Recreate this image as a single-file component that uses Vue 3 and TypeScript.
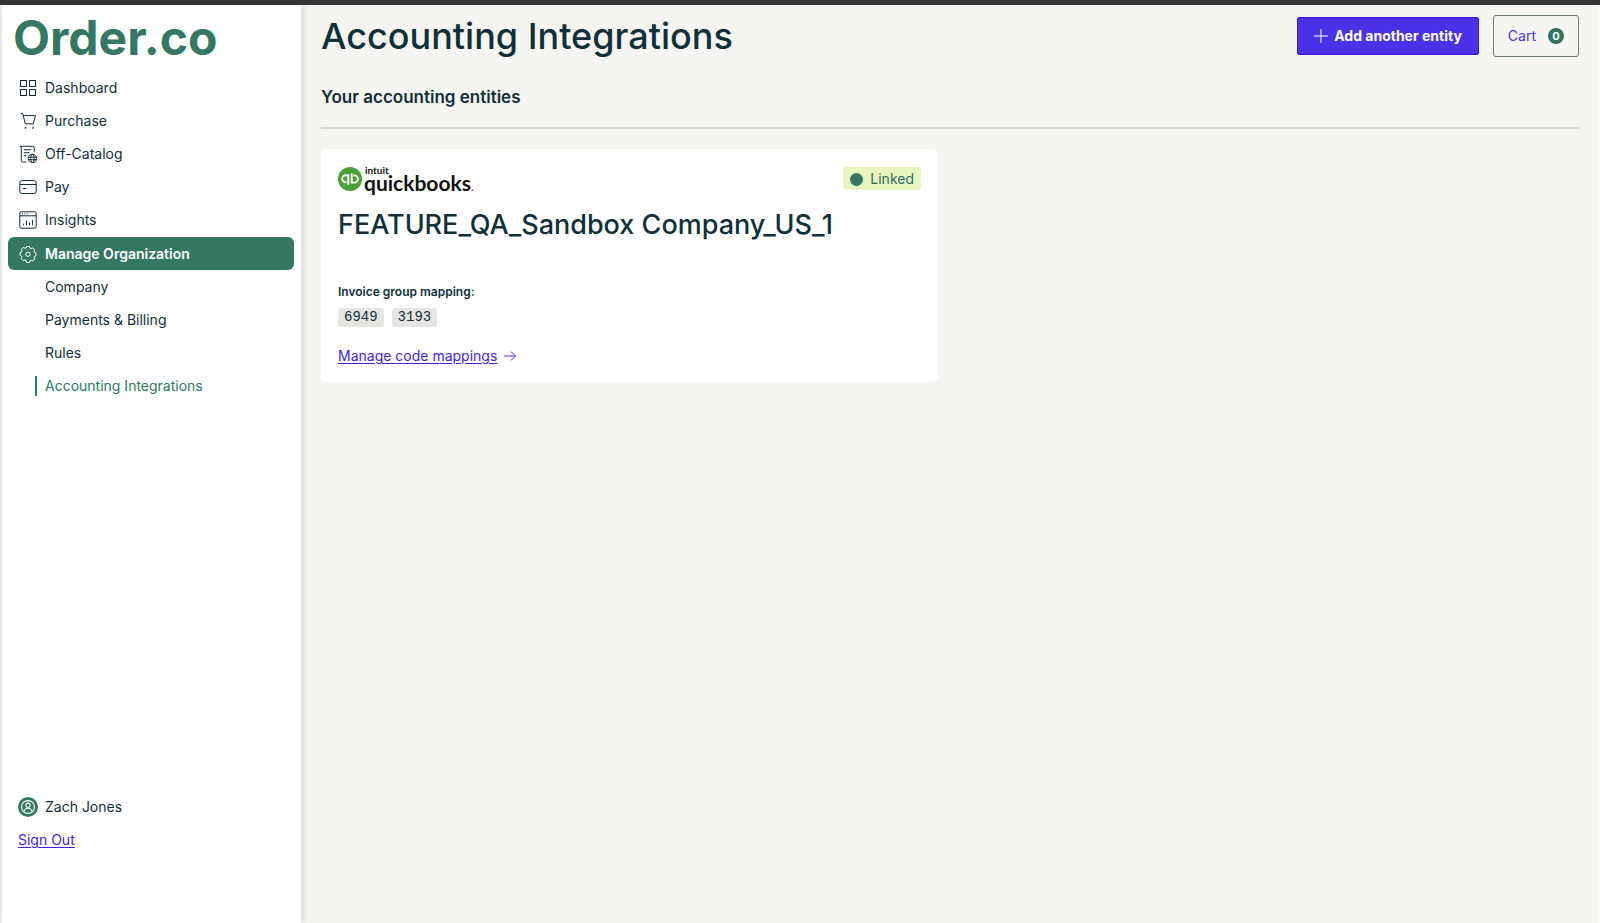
<script setup lang="ts">
interface NavItem {
  label: string
  icon: string
  active?: boolean
}

const navItems: NavItem[] = [
  { label: 'Dashboard', icon: 'grid' },
  { label: 'Purchase', icon: 'cart' },
  { label: 'Off-Catalog', icon: 'catalog' },
  { label: 'Pay', icon: 'card' },
  { label: 'Insights', icon: 'chart' },
  { label: 'Manage Organization', icon: 'gear', active: true },
]

const subItems: { label: string; current?: boolean }[] = [
  { label: 'Company' },
  { label: 'Payments & Billing' },
  { label: 'Rules' },
  { label: 'Accounting Integrations', current: true },
]

const invoiceGroups: string[] = ['6949', '3193']
</script>

<template>
  <div class="app">
    <aside class="sidebar">
      <a class="brand" href="#">Order.co</a>
      <nav class="nav" aria-label="Main">
        <a
          v-for="item in navItems"
          :key="item.label"
          href="#"
          class="nav-item"
          :class="{ active: item.active }"
        >
          <svg class="nav-icon" viewBox="0 0 18 18" aria-hidden="true">
            <g v-if="item.icon === 'grid'">
              <rect x="1.5" y="1.500" width="6" height="6" />
              <rect x="10.500" y="1.500" width="6" height="6" />
              <rect x="1.500" y="10.500" width="6" height="6" />
              <rect x="10.500" y="10.500" width="6" height="6" />
            </g>
            <g v-else-if="item.icon === 'cart'">
              <path d="M1.600 1.600h2.200l2.400 10.200h8.200l2-8.200H4.300" />
              <circle class="solid" cx="6.400" cy="15.800" r="0.900" />
              <circle class="solid" cx="14" cy="15.800" r="0.900" />
            </g>
            <g v-else-if="item.icon === 'catalog'">
              <path d="M7.500 17H3.800a1.500 1.500 0 0 1-1.500-1.500V3A1.500 1.500 0 0 0 .8 1.300h13A1.500 1.500 0 0 1 15.300 2.800v4M4.800 4.700h7.600M4.800 7.700h5.600M4.800 10.700h2.600" />
              <circle cx="13.400" cy="13.400" r="4.100" />
              <path d="M9.500 12.200h7.800M9.500 14.700h7.800" />
              <ellipse cx="13.400" cy="13.400" rx="1.700" ry="4" />
            </g>
            <g v-else-if="item.icon === 'card'">
              <rect x="0.800" y="2.500" width="16.400" height="13" rx="2.400" />
              <path d="M0.800 6.500h16.400M4 10.500h3.400" />
            </g>
            <g v-else-if="item.icon === 'chart'">
              <rect x="0.800" y="0.800" width="16.400" height="16.400" rx="1.400" />
              <path d="M0.800 4.800h16.400M3 2.900h1M5.400 2.900h1M7.800 2.900h1" />
              <path d="M4.600 14.200v-1.600M7.500 14.200V9.800M10.500 14.200v-3M13.500 14.200V9" />
            </g>
            <g v-else>
              <path d="M7.600 1.500h2.800l.6 1.600 1.200.5 1.600-.7 1.900 2-.7 1.500.5 1.200 1.500.6v2.600l-1.500.7-.5 1.200.7 1.500-1.900 1.900-1.600-.7-1.200.5-.6 1.600H7.600L7 15.400l-1.200-.5-1.600.7-1.900-1.900.7-1.500-.5-1.200L1 10.300V7.700l1.500-.6L3 5.900l-.7-1.500 1.900-2 1.600.7L7 3.100z" stroke-linejoin="round" />
              <circle cx="9" cy="9.200" r="2.200" />
            </g>
          </svg>
          <span>{{ item.label }}</span>
        </a>
        <div class="subnav">
          <a
            v-for="item in subItems"
            :key="item.label"
            href="#"
            class="sub-item"
            :class="{ current: item.current }"
          >
            <span>{{ item.label }}</span>
          </a>
        </div>
      </nav>
      <div class="account">
        <div class="user">
          <svg class="avatar" viewBox="0 0 20 20" aria-hidden="true">
            <circle cx="10" cy="10" r="10" fill="#347763" />
            <g fill="none" stroke="#fff" stroke-width="1.100">
              <circle cx="10" cy="10" r="6.400" />
              <circle cx="10" cy="8.200" r="2.100" />
              <path d="M6.200 14.600c.3-2.400 1.800-3.400 3.800-3.400s3.500 1 3.800 3.400" />
            </g>
          </svg>
          <span>Zach Jones</span>
        </div>
        <a class="sign-out" href="#">Sign Out</a>
      </div>
    </aside>

    <main class="main">
      <header class="header">
        <h1>Accounting Integrations</h1>
        <div class="actions">
          <button class="add" type="button">
            <svg viewBox="0 0 14 14" aria-hidden="true"><path d="M7 0v14M0 7h14" /></svg>
            <span>Add another entity</span>
          </button>
          <button class="cart" type="button">
            <span>Cart</span>
            <span class="count">0</span>
          </button>
        </div>
      </header>

      <h2>Your accounting entities</h2>

      <section class="entities">
        <article class="card">
          <div class="card-top">
            <div class="quickbooks">
              <svg viewBox="0 0 24 24" aria-hidden="true">
                <circle cx="12" cy="12" r="12" fill="#4c9f38" />
                <g fill="none" stroke="#fff" stroke-width="1.900">
                  <path d="M10.300 17.800V8.300H7.700a3.500 3.500 0 0 0 0 7h.9" />
                  <path d="M13.700 6.200v9.400h2.600a3.600 3.600 0 0 0 0-7.200h-.9" />
                </g>
              </svg>
              <div class="wordmark">
                <span class="intuit">intuit</span>
                <span class="product">quickbooks<small>.</small></span>
              </div>
            </div>
            <span class="status"><i class="dot"></i>Linked</span>
          </div>
          <h3>FEATURE_QA_Sandbox Company_US_1</h3>
          <p class="label">Invoice group mapping:</p>
          <div class="tags">
            <code v-for="group in invoiceGroups" :key="group">{{ group }}</code>
          </div>
          <a class="manage" href="#">
            <span>Manage code mappings</span>
            <svg viewBox="0 0 12 12" aria-hidden="true"><path d="M0 6h11.400M7 1.600L11.400 6 7 10.400" /></svg>
          </a>
        </article>
      </section>
    </main>
  </div>
</template>

<style>
body {
  margin: 0;
  border-top: 5px solid #363536;
  background: #f7f5f2;
}
</style>

<style scoped>
.app {
  box-sizing: border-box;
  display: grid;
  grid-template-columns: 299px minmax(0, 1fr);
  min-height: calc(100vh - 5px);
  border-left: 2px solid #efefef;
  border-right: 2px solid #fbfafa;
  background: #f7f5f2;
  color: #0f303a;
  font-family: Inter, "Liberation Sans", sans-serif;
  font-size: 14px;
  line-height: 20px;
}

a {
  color: inherit;
  text-decoration: none;
}

h1,
h2,
h3,
p {
  margin: 0;
}

.sidebar {
  box-sizing: border-box;
  display: flex;
  flex-direction: column;
  padding: 8px 7px 73px 6px;
  background: #fff;
  box-shadow: 2px 0 6px rgba(40, 50, 40, 0.16);
}

.brand {
  padding-bottom: 8px;
  padding-left: 5px;
  color: #347763;
  font-size: 48px;
  font-weight: 700;
  line-height: 50px;
}

.nav {
  display: flex;
  flex-direction: column;
}

.nav-item {
  display: flex;
  align-items: center;
  gap: 8px;
  height: 33px;
  padding-left: 11px;
  border-radius: 6px;
}

.nav-item.active {
  margin-top: 1px;
  background: #347763;
  color: #fff;
  font-weight: 600;
}

.nav-icon {
  width: 18px;
  height: 18px;
  fill: none;
  stroke: currentColor;
  stroke-width: 1;
}

.nav-icon .solid {
  fill: currentColor;
  stroke: none;
}

.subnav {
  padding-left: 27px;
}

.sub-item {
  display: flex;
  align-items: center;
  height: 33px;
}

.sub-item span {
  padding-left: 8px;
  border-left: 2px solid transparent;
}

.sub-item.current {
  color: #2c7a61;
}

.sub-item.current span {
  border-color: #347763;
}

.account {
  display: flex;
  flex-direction: column;
  align-items: flex-start;
  gap: 13px;
  margin-top: auto;
  padding-left: 10px;
}

.user {
  display: flex;
  align-items: center;
  gap: 7px;
}

.avatar {
  width: 20px;
  height: 20px;
}

.sign-out,
.manage span {
  color: #3d1fe0;
  text-decoration: underline;
  text-underline-offset: 2px;
}

.main {
  padding: 10px 19px 24px 20px;
}

.header {
  display: flex;
  align-items: center;
  justify-content: space-between;
}

h1 {
  font-size: 36px;
  font-weight: 500;
  line-height: 42px;
}

.actions {
  display: flex;
  align-items: center;
  gap: 14px;
}

button {
  display: flex;
  align-items: center;
  font: inherit;
  cursor: pointer;
}

.add {
  gap: 6px;
  height: 38px;
  padding: 0 16px;
  border: 1px solid #3a12e6;
  border-radius: 2px;
  background: #4b32e8;
  color: #fff;
  font-weight: 700;
}

.add svg {
  width: 14px;
  height: 14px;
  fill: none;
  stroke: currentColor;
}

.cart {
  gap: 12px;
  height: 42px;
  padding: 0 14px;
  border: 1px solid #6c7a78;
  border-radius: 3px;
  background: transparent;
  color: #4b32e8;
}

.count {
  width: 16px;
  border-radius: 8px;
  background: #2f745f;
  color: #fff;
  font-size: 11px;
  font-weight: 700;
  line-height: 16px;
  text-align: center;
}

h2 {
  margin-top: 28px;
  padding-bottom: 18px;
  border-bottom: 2px solid #d9d8d4;
  font-size: 17px;
  font-weight: 600;
  line-height: 24px;
}

.entities {
  display: grid;
  grid-template-columns: repeat(2, minmax(0, 1fr));
  gap: 24px;
  margin-top: 20px;
}

.card {
  padding: 16px 17px;
  border-radius: 6px;
  background: #fff;
}

.card-top {
  display: flex;
  align-items: center;
  justify-content: space-between;
  height: 27px;
}

.quickbooks {
  display: flex;
  align-items: center;
  gap: 2px;
}

.quickbooks svg {
  width: 24px;
  height: 24px;
}

.wordmark {
  display: flex;
  flex-direction: column;
  color: #111;
  font-family: Lato, "Liberation Sans", sans-serif;
}

.intuit {
  padding-left: 1px;
  font-size: 10px;
  font-weight: 700;
  line-height: 8px;
}

.product {
  font-size: 21px;
  font-weight: 700;
  line-height: 18px;
}

.product small {
  font-size: 10px;
  line-height: 10px;
}

.status {
  display: flex;
  align-items: center;
  gap: 7px;
  padding: 2px 7px 1px;
  border-radius: 3px;
  background: #e8f5c0;
  color: #2c6e5a;
}

.dot {
  width: 13px;
  height: 13px;
  border-radius: 50%;
  background: #347763;
}

h3 {
  margin-top: 17px;
  font-size: 27px;
  font-weight: 500;
  line-height: 32px;
}

.label {
  margin-top: 43px;
  font-size: 12px;
  font-weight: 600;
  line-height: 16px;
}

.tags {
  display: flex;
  gap: 8px;
  margin-top: 8px;
}

.tags code {
  padding: 0 6px;
  border-radius: 3px;
  background: #e6e5e1;
  font-family: "Liberation Mono", monospace;
  font-size: 14px;
  line-height: 19px;
}

.manage {
  display: flex;
  align-items: center;
  gap: 7px;
  margin-top: 19px;
}

.manage svg {
  width: 12px;
  height: 12px;
  fill: none;
  stroke: #4b32e8;
}
</style>
